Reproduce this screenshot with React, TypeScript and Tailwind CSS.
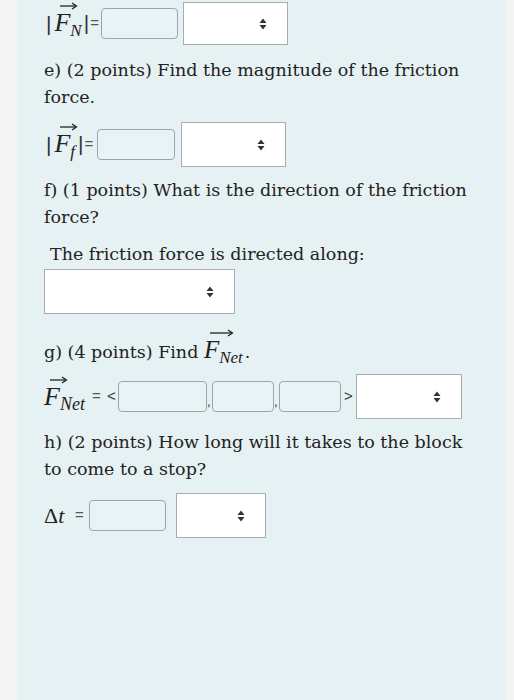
import React from 'react';

const serif = { fontFamily: '"DejaVu Serif", "Liberation Serif", serif' };
const mathFont = { fontFamily: '"Liberation Serif", "Times New Roman", serif' };
const sans = { fontFamily: '"Liberation Sans", Arial, sans-serif' };

function Arrows() {
    return (
        <svg width="8" height="12" viewBox="0 0 8 12" className="text-[#333]">
            <path d="M4 0.5 L7.5 5 L0.5 5 Z" fill="currentColor" />
            <path d="M4 11.5 L7.5 7 L0.5 7 Z" fill="currentColor" />
        </svg>
    );
}

function Select({ w, h = 45, arrowRight = 20 }: { w: number; h?: number; arrowRight?: number }) {
    return (
        <div
            className="bg-white border border-[#a9adae] flex items-center justify-end shrink-0"
            style={{ width: w, height: h, paddingRight: arrowRight }}
        >
            <Arrows />
        </div>
    );
}

function Input({ w }: { w: number }) {
    return (
        <div
            className="h-[31px] rounded-[4px] border border-[#9aa7aa] bg-[#e9f3f5] shrink-0"
            style={{ width: w }}
        />
    );
}

// F with vector arrow and subscript
function Vec({ sub, size = 26, subSize = 17, arrowW = 18 }: { sub: string; size?: number; subSize?: number; arrowW?: number }) {
    return (
        <span className="relative inline-flex items-baseline text-[#222] leading-none" style={mathFont}>
            <svg
                className="absolute left-[6px] top-[-8px]"
                width={arrowW}
                height="8"
                viewBox={`0 0 ${arrowW} 8`}
            >
                <path d={`M0 4 H${arrowW - 2}`} stroke="#222" strokeWidth="1.3" />
                <path d={`M${arrowW - 6} 1 L${arrowW - 1.5} 4 L${arrowW - 6} 7`} stroke="#222" strokeWidth="1.3" fill="none" />
            </svg>
            <span className="italic" style={{ fontSize: size }}>F</span>
            <span className="italic relative top-[5px]" style={{ fontSize: subSize }}>{sub}</span>
        </span>
    );
}

function Para({ children, className = '' }: { children: React.ReactNode; className?: string }) {
    return (
        <p className={`w-[428px] text-[17.5px] leading-[27px] text-[#222] ${className}`} style={serif}>
            {children}
        </p>
    );
}

function Bar() {
    return <span className="text-[21px] leading-none text-[#333]" style={sans}>|</span>;
}

export default function App() {
    return (
        <div className="w-[514px] h-[700px] bg-[#f4f4f4] flex overflow-hidden">
            <div className="ml-[17px] w-[488px] h-full bg-[#e6f1f3] pl-[27px] pt-[2px]">
                {/* |F_N| row */}
                <div className="flex items-center h-[43px]">
                    <span className="flex items-center w-[57px] pl-[2px]">
                        <Bar />
                        <span className="ml-[3px]"><Vec sub="N" /></span>
                        <span className="ml-[2px]"><Bar /></span>
                        <span className="text-[15px] text-[#555] ml-[1px]" style={sans}>=</span>
                    </span>
                    <Input w={77} />
                    <div className="ml-[5px]">
                        <Select w={105} h={43} />
                    </div>
                </div>

                <Para className="mt-[12px]">
                    e) (2 points) Find the magnitude of the friction force.
                </Para>

                <div className="flex items-center h-[45px] mt-[11px]">
                    <span className="flex items-center w-[53px] pl-[2px]">
                        <Bar />
                        <span className="ml-[3px]"><Vec sub="f" /></span>
                        <span className="ml-[3px]"><Bar /></span>
                        <span className="text-[15px] text-[#555] ml-[1px]" style={sans}>=</span>
                    </span>
                    <Input w={78} />
                    <div className="ml-[6px]">
                        <Select w={105} />
                    </div>
                </div>

                <Para className="mt-[10px]">
                    f) (1 points) What is the direction of the friction force?
                </Para>

                <Para className="mt-[10px] ml-[6px]">The friction force is directed along:</Para>

                <div className="mt-[1px]">
                    <Select w={191} />
                </div>

                <Para className="mt-[23px] flex items-baseline">
                    <span>g) (4 points) Find&nbsp;</span>
                    <Vec sub="Net" size={25} subSize={17} arrowW={24} />
                    <span className="ml-[2px]">.</span>
                </Para>

                <div className="flex items-center h-[45px] mt-[8px]">
                    <span className="w-[48px] flex items-center">
                        <Vec sub="Net" size={26} subSize={18} arrowW={18} />
                    </span>
                    <span className="text-[15px] text-[#555] w-[15px]" style={sans}>=</span>
                    <span className="text-[15px] text-[#333] w-[11px]" style={sans}>&lt;</span>
                    <Input w={89} />
                    <span className="text-[13px] text-[#333] w-[5px] self-end mb-[8px]" style={sans}>,</span>
                    <Input w={62} />
                    <span className="text-[13px] text-[#333] w-[5px] self-end mb-[8px]" style={sans}>,</span>
                    <Input w={62} />
                    <span className="text-[15px] text-[#333] w-[15px] pl-[3px]" style={sans}>&gt;</span>
                    <Select w={106} />
                </div>

                <Para className="mt-[10px]">
                    h) (2 points) How long will it takes to the block to come to a stop?
                </Para>

                <div className="flex items-center h-[45px] mt-[10px]">
                    <span className="w-[31px] text-[22px] text-[#222]" style={mathFont}>
                        Δ<span className="italic">t</span>
                    </span>
                    <span className="text-[15px] text-[#555] w-[14px]" style={sans}>=</span>
                    <Input w={77} />
                    <div className="ml-[10px]">
                        <Select w={90} />
                    </div>
                </div>
            </div>
        </div>
    );
}
